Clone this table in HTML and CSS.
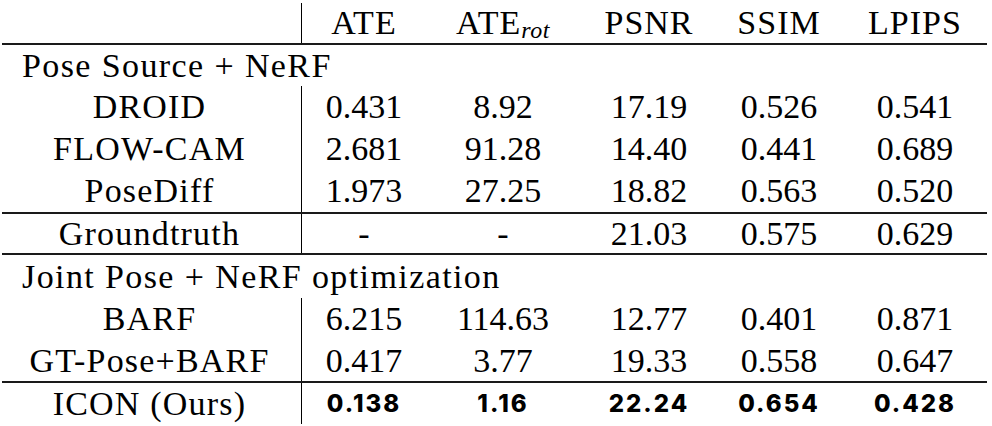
FILE: index.html
```html
<!DOCTYPE html>
<html lang="en">
<head>
    <meta charset="UTF-8">
    <title>Pose and NeRF results</title>
    <link rel="stylesheet" href="styles.css">
</head>
<body>
    <div class="results">
        <div class="row head ruled">
            <div class="cell method"></div>
            <div class="cell">ATE</div>
            <div class="cell">ATE<span class="sub">rot</span></div>
            <div class="cell">PSNR</div>
            <div class="cell">SSIM</div>
            <div class="cell last">LPIPS</div>
        </div>
        <div class="row group first-group">Pose Source + NeRF</div>
        <div class="row">
            <div class="cell method">DROID</div>
            <div class="cell">0.431</div><div class="cell">8.92</div><div class="cell">17.19</div><div class="cell">0.526</div><div class="cell last">0.541</div>
        </div>
        <div class="row">
            <div class="cell method">FLOW-CAM</div>
            <div class="cell">2.681</div><div class="cell">91.28</div><div class="cell">14.40</div><div class="cell">0.441</div><div class="cell last">0.689</div>
        </div>
        <div class="row ruled">
            <div class="cell method">PoseDiff</div>
            <div class="cell">1.973</div><div class="cell">27.25</div><div class="cell">18.82</div><div class="cell">0.563</div><div class="cell last">0.520</div>
        </div>
        <div class="row ruled short">
            <div class="cell method">Groundtruth</div>
            <div class="cell">-</div><div class="cell">-</div><div class="cell">21.03</div><div class="cell">0.575</div><div class="cell last">0.629</div>
        </div>
        <div class="row group second-group">Joint Pose + NeRF optimization</div>
        <div class="row">
            <div class="cell method">BARF</div>
            <div class="cell">6.215</div><div class="cell">114.63</div><div class="cell">12.77</div><div class="cell">0.401</div><div class="cell last">0.871</div>
        </div>
        <div class="row ruled tight">
            <div class="cell method">GT-Pose+BARF</div>
            <div class="cell">0.417</div><div class="cell">3.77</div><div class="cell">19.33</div><div class="cell">0.558</div><div class="cell last">0.647</div>
        </div>
        <div class="row tight">
            <div class="cell method">ICON (Ours)</div>
            <div class="cell best">0.138</div><div class="cell best">1.16</div><div class="cell best">22.24</div><div class="cell best">0.654</div><div class="cell best last">0.428</div>
        </div>
    </div>
</body>
</html>
```

FILE: styles.css
```css
body {
    margin: 0;
    font-family: "Liberation Serif", "Times New Roman", serif;
}

.results {
    margin: 3px 0 0 2px;
    width: 985px;
    font-family: "Liberation Serif", "Times New Roman", serif;
    font-size: 34px;
    line-height: 1;
}

.row {
    display: grid;
    grid-template-columns: 300px 124px 154px 138px 122px 147px;
    height: 42px;
}

.row.head {
    height: 40px;
}

.row.ruled {
    border-bottom: 2px solid #1a1a1a;
}

.row.short {
    height: 39px;
}

.row.tight {
    height: 41px;
}

.cell {
    display: flex;
    align-items: center;
    justify-content: center;
    white-space: nowrap;
    font-family: "Liberation Serif", "Times New Roman", serif;
}

.head .cell {
    letter-spacing: 1px;
}

.method {
    border-right: 1px solid #000;
    letter-spacing: 1.2px;
    padding-right: 4px;
}

.last {
    padding-left: 3px;
}

.sub {
    font-size: 24px;
    font-style: italic;
    position: relative;
    top: 7px;
    letter-spacing: 0.5px;
}

.group {
    display: flex;
    align-items: center;
    padding-left: 20px;
    letter-spacing: 1.4px;
}

.first-group {
    height: 41px;
}

.second-group {
    height: 43px;
}

.cell.best {
    font-family: Inter, sans-serif;
    font-weight: 800;
    font-size: 24px;
    letter-spacing: 2px;
}
```
